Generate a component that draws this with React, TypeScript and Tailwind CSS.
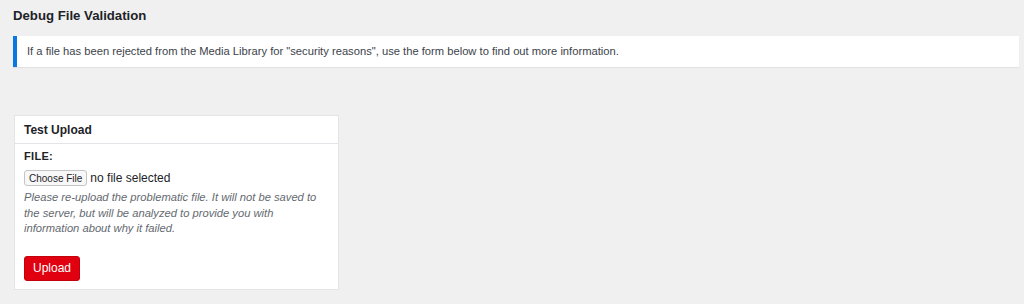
import React from "react";

export default function App() {
  return (
    <div
      className="w-full h-[304px] bg-[#f0f0f1] pl-[13px] pr-[5px] pt-[7px] text-[#1d2327]"
      style={{ fontFamily: '"Liberation Sans", Arial, sans-serif' }}
    >
      <h1 className="text-[13.2px] font-bold leading-[17px] m-0">Debug File Validation</h1>
      <div className="mt-[12px] h-[31px] flex items-center bg-white border-l-4 border-[#0a78e0] shadow-[0_1px_1px_rgba(0,0,0,0.06)] pl-[10px]">
        <p className="text-[11.2px] text-[#3c434a]">
          If a file has been rejected from the Media Library for "security reasons", use the form below to find out more information.
        </p>
      </div>
      <div className="mt-[48px] ml-[1px] w-[325px] bg-white border border-[#e2e4e7]">
        <div className="h-[28px] flex items-center pl-[9px] border-b border-[#e2e4e7]">
          <h2 className="text-[12px] font-bold">Test Upload</h2>
        </div>
        <div className="px-[9px] pt-[5px] pb-[8px]">
          <div className="text-[11px] font-bold leading-[15px] tracking-[0.3px]">FILE:</div>
          <div className="mt-[5px] flex items-center gap-[3px]">
            <span className="h-[16px] px-[4px] flex items-center border border-[#c4c4c4] rounded-[3px] bg-[#f8f8f8] text-[10px] text-[#1d2327]">
              Choose File
            </span>
            <span className="text-[12px]">no file selected</span>
          </div>
          <p className="mt-[3px] text-[11.2px] italic leading-[15.5px] text-[#646970] pr-[10px]">
            Please re-upload the problematic file. It will not be saved to the server, but will be analyzed to provide you with information about why it failed.
          </p>
          <button className="mt-[19px] h-[25px] w-[56px] rounded-[3px] bg-[#e1000f] border border-[#c4000c] text-white text-[12px]">
            Upload
          </button>
        </div>
      </div>
    </div>
  );
}
